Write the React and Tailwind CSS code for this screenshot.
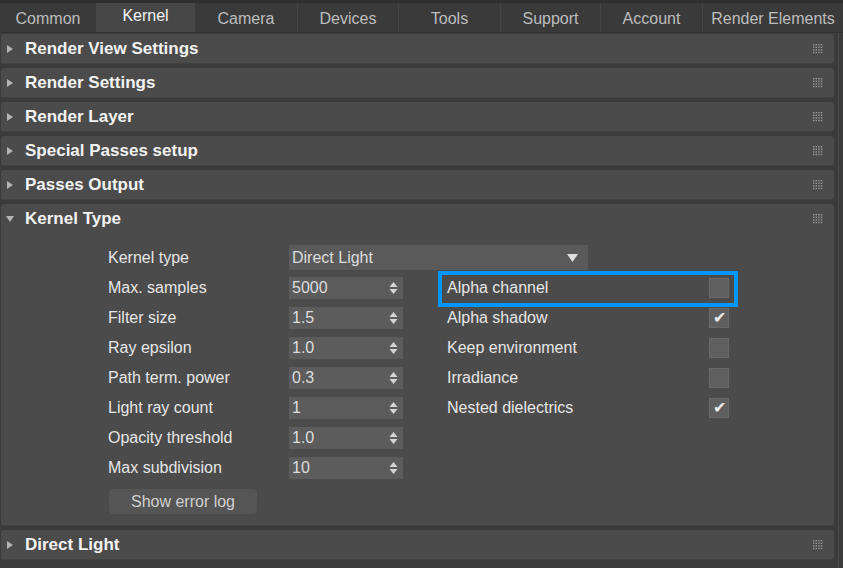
import React from 'react';

const font = { fontFamily: '"Liberation Sans", Arial, sans-serif' };

const tabs = [
  { label: 'Common', w: 'w-[96px]' },
  { label: 'Kernel', w: 'w-[99px]', active: true },
  { label: 'Camera', w: 'w-[102px]' },
  { label: 'Devices', w: 'w-[101px]' },
  { label: 'Tools', w: 'w-[102px]' },
  { label: 'Support', w: 'w-[100px]' },
  { label: 'Account', w: 'w-[102px]' },
  { label: 'Render Elements', w: 'flex-1' },
];

const collapsed = [
  'Render View Settings',
  'Render Settings',
  'Render Layer',
  'Special Passes setup',
  'Passes Output',
];

const rows = [
  { label: 'Max. samples', value: '5000', check: { label: 'Alpha channel', on: false, hl: true } },
  { label: 'Filter size', value: '1.5', check: { label: 'Alpha shadow', on: true } },
  { label: 'Ray epsilon', value: '1.0', check: { label: 'Keep environment', on: false } },
  { label: 'Path term. power', value: '0.3', check: { label: 'Irradiance', on: false } },
  { label: 'Light ray count', value: '1', check: { label: 'Nested dielectrics', on: true } },
  { label: 'Opacity threshold', value: '1.0' },
  { label: 'Max subdivision', value: '10' },
];

function Grip() {
  return (
    <svg width="10" height="10" viewBox="0 0 10 10" className="mr-[11px]">
      {[0, 1, 2, 3].map((r) =>
        [0, 1, 2, 3].map((c) => (
          <rect key={`${r}-${c}`} x={c * 2.6} y={r * 2.6} width="1.4" height="1.4" fill="#9a9a9a" />
        ))
      )}
    </svg>
  );
}

function Arrow({ open }) {
  return (
    <svg width="8" height="10" viewBox="0 0 8 10" className="ml-[5px] mr-[11px]">
      {open ? (
        <polygon points="0,2 8,2 4,8" fill="#b4b4b4" />
      ) : (
        <polygon points="1,1 7,5 1,9" fill="#b4b4b4" />
      )}
    </svg>
  );
}

function Header({ title, open }) {
  return (
    <div className="flex items-center h-[29px]">
      <Arrow open={open} />
      <span className="flex-1 text-[17px] font-bold text-[#f2f2f2]">{title}</span>
      <Grip />
    </div>
  );
}

function Spinner({ value }) {
  return (
    <div className="w-[114px] h-[22px] bg-[#5c5c5c] flex items-center justify-between pl-[3px] pr-[5px]">
      <span className="text-[16px] text-[#dcdcdc]">{value}</span>
      <svg width="9" height="14" viewBox="0 0 9 14">
        <polygon points="4.5,1 8.5,6 0.5,6" fill="#d4d4d4" />
        <polygon points="0.5,8 8.5,8 4.5,13" fill="#d4d4d4" />
      </svg>
    </div>
  );
}

function Check({ label, on, hl }) {
  return (
    <div className="relative w-[300px] h-[30px] flex items-center pl-[9px]">
      {hl && <div className="absolute left-0 right-0 -top-[2px] -bottom-[4px] border-4 border-[#0096ff]" />}
      <span className="flex-1 text-[16px] text-[#e6e6e6]">{label}</span>
      <div className="w-[20px] h-[20px] mr-[9px] bg-[#5f5f5f] border border-[#686868] flex items-center justify-center">
        {on && <span className="text-[16px] leading-none text-[#ececec]">✔</span>}
      </div>
    </div>
  );
}

export default function App() {
  return (
    <div className="w-[843px] h-[568px] overflow-hidden bg-[#3b3b3b] flex flex-col" style={font}>
      <div className="h-[3px] bg-[#2f2f2f]" />
      <div className="flex h-[30px] bg-[#3a3a3a] border-b border-[#333]">
        {tabs.map((t, i) => (
          <div
            key={t.label}
            className={`${t.w} flex items-center justify-center text-[16px] ${
              t.active ? 'bg-[#474747] text-[#f4f4f4]' : 'text-[#bdbdbd]'
            } ${i > 2 ? 'border-l border-[#454545]' : ''}`}
          >
            <span className={t.active ? '-mt-[4px]' : 'mt-[2px]'}>{t.label}</span>
          </div>
        ))}
      </div>
      <div className="flex flex-1">
        <div className="flex-1 flex flex-col gap-[4px] pt-[1px] pl-[1px]">
          {collapsed.map((c) => (
            <div key={c} className="bg-[#4b4b4b] rounded-[3px] border-b border-[#424242]">
              <Header title={c} />
            </div>
          ))}
          <div className="bg-[#4b4b4b] rounded-[3px] border-b border-[#424242] pb-[10px]">
            <Header title="Kernel Type" open />
            <div className="pl-[107px] pt-[12px]">
              <div className="flex items-center h-[25px]">
                <span className="w-[181px] text-[16px] text-[#e6e6e6]">Kernel type</span>
                <div className="w-[299px] h-[25px] bg-[#5a5a5a] flex items-center justify-between pl-[3px] pr-[10px]">
                  <span className="text-[16px] text-[#dcdcdc]">Direct Light</span>
                  <svg width="11" height="8" viewBox="0 0 11 8">
                    <polygon points="0,0 11,0 5.5,8" fill="#e0e0e0" />
                  </svg>
                </div>
              </div>
              <div className="mt-[3px]">
                {rows.map((r) => (
                  <div key={r.label} className="flex items-center h-[30px]">
                    <span className="w-[181px] text-[16px] text-[#e6e6e6]">{r.label}</span>
                    <Spinner value={r.value} />
                    <div className="w-[35px]" />
                    {r.check && <Check {...r.check} />}
                  </div>
                ))}
              </div>
              <button className="mt-[5px] w-[150px] h-[27px] rounded-[5px] bg-[#555555] border border-[#4a4a4a] text-[16px] text-[#d0d0d0]">
                Show error log
              </button>
            </div>
          </div>
          <div className="bg-[#4b4b4b] rounded-[3px] border-b border-[#424242]">
            <Header title="Direct Light" />
          </div>
        </div>
        <div className="w-[9px] flex justify-center">
          <div className="w-[1px] bg-[#4a4a4a]" />
        </div>
      </div>
    </div>
  );
}
